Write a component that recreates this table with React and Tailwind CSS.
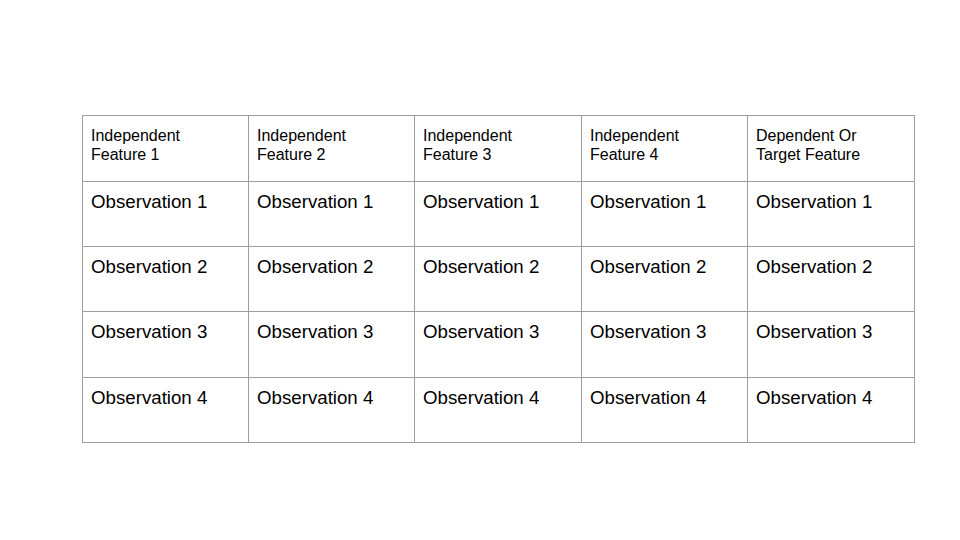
export default function App() {
  const headers = [
    ["Independent", "Feature 1"],
    ["Independent", "Feature 2"],
    ["Independent", "Feature 3"],
    ["Independent", "Feature 4"],
    ["Dependent Or", "Target Feature"],
  ];
  const rows = [1, 2, 3, 4];
  const rowH = ["h-[65px]", "h-[65px]", "h-[66px]", "h-[65px]"];
  return (
    <div className="w-[960px] h-[540px] bg-white overflow-hidden" style={{ fontFamily: '"Liberation Sans", Arial, sans-serif' }}>
      <div className="ml-[82px] mt-[115px] inline-grid grid-cols-[166px_166px_167px_166px_167px] border-l border-t border-[#9e9e9e] text-black">
        {headers.map((h, i) => (
          <div key={i} className="h-[66px] border-r border-b border-[#9e9e9e] pl-[8px] pt-[10px] text-[16px] leading-[19px]">
            <div>{h[0]}</div>
            <div>{h[1]}</div>
          </div>
        ))}
        {rows.map((r, ri) =>
          headers.map((_, ci) => (
            <div key={`${r}-${ci}`} className={`${rowH[ri]} border-r border-b border-[#9e9e9e] pl-[8px] pt-[9px] text-[18.7px] leading-[22px]`}>
              Observation {r}
            </div>
          ))
        )}
      </div>
    </div>
  );
}
